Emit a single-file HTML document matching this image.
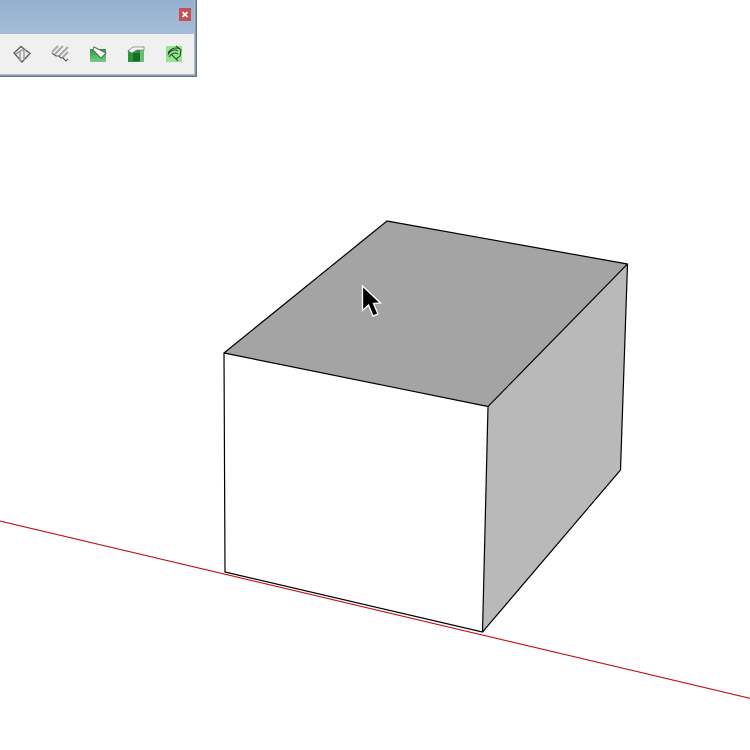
<!DOCTYPE html>
<html>
<head>
<meta charset="utf-8">
<style>
html,body{margin:0;padding:0;background:#fff;width:750px;height:750px;overflow:hidden}
svg{display:block;position:absolute;left:0;top:0}
</style>
</head>
<body>
<svg width="750" height="750" viewBox="0 0 750 750" xmlns="http://www.w3.org/2000/svg">
<defs>
<linearGradient id="tb" x1="0" y1="0" x2="0" y2="1">
<stop offset="0" stop-color="#94b0cf"/>
<stop offset="1" stop-color="#a5bdd8"/>
</linearGradient>
<linearGradient id="g1" x1="0" y1="0" x2="0" y2="1">
<stop offset="0" stop-color="#2f9a3f"/>
<stop offset="1" stop-color="#74cf80"/>
</linearGradient>
<filter id="soft" x="-5%" y="-5%" width="110%" height="110%"><feGaussianBlur stdDeviation="0.35"/></filter>
</defs>

<!-- toolbar window -->
<rect x="0" y="0" width="197" height="77" fill="#6e7478"/>
<rect x="0" y="0" width="195.500" height="75.500" fill="#a5bdd8"/>
<rect x="0" y="0" width="194" height="34" fill="url(#tb)"/>
<rect x="0" y="34" width="194" height="40" fill="#f0f0f0"/>
<rect x="179" y="8" width="12" height="13" fill="#c4504f"/>
<path d="M182.500 12 L187.500 17 M187.500 12 L182.500 17" stroke="#fff" stroke-width="1.700"/>

<g filter="url(#soft)">
<!-- icon 1 -->
<path d="M21 46.500 L30 53.500 L22 62 L14 53 Z" fill="#ececec" stroke="#5a5a5a" stroke-width="1.300"/>
<path d="M16 54 L22 50 L26 50 M20 52 V61 M24 50 V60" fill="none" stroke="#9a9a9a" stroke-width="1.400"/>
<!-- icon 2 -->
<g fill="none" stroke="#a8a8a8" stroke-width="2">
<path d="M52 52 L58 46 M55 54 L63 46 M59 56 L68 47 M62 58 L68 52"/>
</g>
<path d="M52 53 L56 56 L59 56 L61 58 L63 58 L66 61 L68 59" fill="none" stroke="#555" stroke-width="1.100"/>

<!-- icon 3 -->
<rect x="90" y="49" width="16" height="13" fill="url(#g1)"/>
<path d="M94 47 L106 53 L101 58 L93 50 Z" fill="#fff" stroke="#666" stroke-width="1"/>
<!-- icon 4 -->
<rect x="128" y="50" width="16" height="12" fill="#2a9637"/>
<rect x="133" y="53" width="7" height="8" fill="#156f22"/>
<path d="M140 50 H144 V62 H140 Z" fill="#79c983" opacity=".8"/>
<path d="M128 51 L133 47 H144 V50 H137 L132 53 Z" fill="#fff" stroke="#777" stroke-width=".8"/>
<!-- icon 5 -->
<rect x="166" y="46" width="16" height="16" fill="#8fe88f"/>
<g fill="none" stroke="#253f25" stroke-width="1">
<path d="M168 55 C170 50 175 49 178 51 M168 53 C171 48 176 47 180 49 M169 57 C172 53 175 52 178 54"/>
<path d="M176 46 L181 50 L180 56 L176 59 M172 55 L178 61"/>
</g>
</g>

<!-- box faces -->
<polygon points="224,353 387,221 627.500,264 488,406.500" fill="#a4a4a4"/>
<polygon points="488,406.500 627.500,264 620.500,470 482.500,632.500" fill="#b9b9b9"/>
<polygon points="224,353 488,406.500 482.500,632.500 225,572" fill="#ffffff"/>

<!-- red axis -->
<line x1="0" y1="521" x2="750" y2="698.300" stroke="#c01010" stroke-width="1.100"/>

<!-- box edges -->
<g fill="none" stroke="#000" stroke-width="1.200" stroke-linejoin="round">
<polygon points="224,353 387,221 627.500,264 620.500,470 482.500,632 225,572"/>
<path d="M224 353 L488 406.500 L627.500 264 M488 406.500 L482.500 632"/>
</g>

<!-- cursor -->
<path d="M362.500 286 V310.500 L368.500 305 L373 316 L378 314 L373.500 303.500 L380.500 303 Z" fill="#000" stroke="#fff" stroke-width="1.300" stroke-linejoin="miter"/>
</svg>
</body>
</html>
